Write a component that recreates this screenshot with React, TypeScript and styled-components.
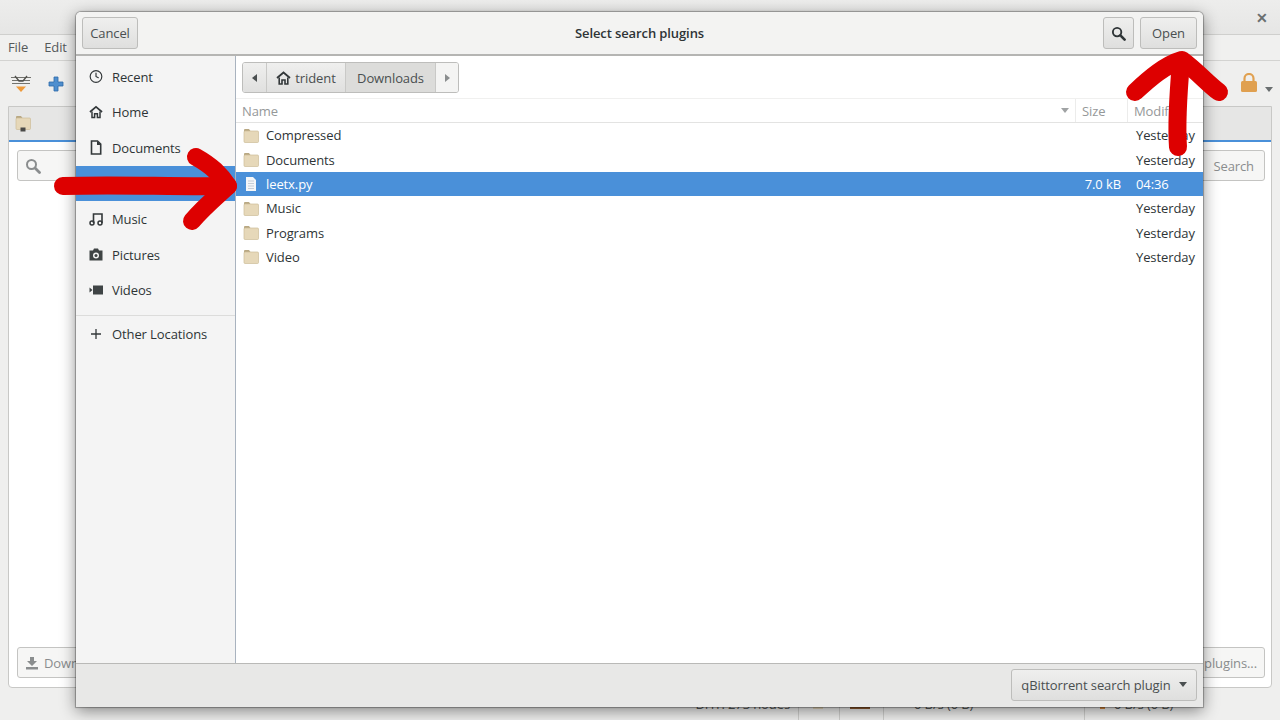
import React from "react";
import styled, { createGlobalStyle } from "styled-components";
import { Clock } from "lucide-react";

const GlobalStyle = createGlobalStyle`
  html, body {
    margin: 0;
    padding: 0;
    width: 1280px;
    height: 720px;
    overflow: hidden;
    background: #1c1c1c;
    font-family: "Open Sans", "Noto Sans", sans-serif;
    font-size: 13px;
    letter-spacing: -0.1px;
    color: #2e3436;
  }
`;

const Screen = styled.div`
  position: relative;
  width: 1280px;
  height: 720px;
  overflow: hidden;
`;

/* the qBittorrent window behind the dialog */
const AppWindow = styled.div`
  width: 1280px;
  height: 720px;
  display: flex;
  flex-direction: column;
  background: #efefee;
  border-radius: 6px 6px 0 0;
`;

const TitleBar = styled.div`
  height: 35px;
  flex-shrink: 0;
  box-sizing: border-box;
  display: flex;
  justify-content: flex-end;
  align-items: center;
  padding-right: 12px;
  border-bottom: 1px solid #cfcfcd;
  background: linear-gradient(#ededec, #e6e6e5);
  color: #6a6f70;
  font-size: 14px;
  font-weight: 700;
`;

const MenuBar = styled.div`
  height: 26px;
  flex-shrink: 0;
  box-sizing: border-box;
  display: flex;
  align-items: center;
  gap: 16px;
  padding: 0 0 2px 8px;
  border-bottom: 1px solid #d3d3d1;
  background: #f0f0ef;
  color: #55595a;
`;

const Toolbar = styled.div`
  height: 45px;
  flex-shrink: 0;
  display: flex;
  align-items: center;
  justify-content: space-between;
  padding: 0 7px 0 10px;
`;

const ToolGroup = styled.div`
  display: flex;
  align-items: center;
  gap: 16px;
`;

const LockGroup = styled.div`
  display: flex;
  align-items: flex-end;
  gap: 8px;
  padding-bottom: 3px;
`;

const Panel = styled.div`
  height: 582px;
  flex-shrink: 0;
  margin: 0 8px;
  box-sizing: border-box;
  display: flex;
  flex-direction: column;
  background: #fff;
  border: 1px solid #c8c8c6;
  border-radius: 0 0 4px 4px;
`;

const PanelTabs = styled.div`
  height: 35px;
  flex-shrink: 0;
  box-sizing: border-box;
  display: flex;
  align-items: center;
  padding-left: 6px;
  background: #e6e6e5;
  border-bottom: 2px solid #4a90d9;
`;

const PanelBody = styled.div`
  flex: 1;
  display: flex;
  flex-direction: column;
  justify-content: space-between;
  padding: 8px 6px 9px 8px;
`;

const PanelRow = styled.div`
  display: flex;
  justify-content: space-between;
`;

const BackButton = styled.div<{ $end?: number }>`
  height: 31px;
  width: 150px;
  display: flex;
  align-items: center;
  gap: 5px;
  padding: 0 ${(props) => props.$end ?? 7}px 0 7px;
  box-sizing: border-box;
  border: 1px solid #c4c4c2;
  border-radius: 3px;
  background: #f6f6f5;
  color: #8a8d8e;
  justify-content: ${(props) => (props.$end ? "flex-end" : "flex-start")};
`;

const StatusBar = styled.div`
  height: 32px;
  flex-shrink: 0;
  display: flex;
  align-items: stretch;
  padding-left: 640px;
  color: #55595a;
`;

const StatusCell = styled.div<{ $width: number; $pad?: number; $end?: boolean }>`
  width: ${(props) => props.$width}px;
  display: flex;
  align-items: center;
  gap: 9px;
  justify-content: ${(props) => (props.$end ? "flex-end" : "flex-start")};
  box-sizing: border-box;
  padding: 0 ${(props) => (props.$end ? 8 : 0)}px 0 ${(props) => props.$pad ?? 0}px;
  border-right: 1px solid #cfcfcd;
  white-space: nowrap;
  &:last-child {
    border-right: none;
  }
`;

const StatusDot = styled.span<{ $color: string; $width: number }>`
  width: ${(props) => props.$width}px;
  height: 9px;
  background: ${(props) => props.$color};
`;

/* file chooser dialog */
const Dialog = styled.div`
  position: absolute;
  left: 76px;
  top: 12px;
  width: 1127px;
  height: 695px;
  display: flex;
  flex-direction: column;
  background: #fff;
  border-radius: 5px 5px 0 0;
  box-shadow: 0 0 1px 1px rgba(0, 0, 0, 0.3), 0 4px 16px rgba(0, 0, 0, 0.45);
`;

const DialogHeader = styled.div`
  height: 44px;
  flex-shrink: 0;
  box-sizing: border-box;
  display: flex;
  align-items: center;
  justify-content: space-between;
  padding: 0 6px;
  background: #f3f3f2;
  border-bottom: 2px solid #b5b5b3;
  border-radius: 5px 5px 0 0;
`;

const HeaderTitle = styled.div`
  position: absolute;
  left: 0;
  right: 0;
  top: 12px;
  text-align: center;
  font-weight: 600;
  pointer-events: none;
`;

const HeaderActions = styled.div`
  display: flex;
  gap: 6px;
`;

const Button = styled.div<{ $width: number }>`
  width: ${(props) => props.$width}px;
  height: 32px;
  box-sizing: border-box;
  display: flex;
  align-items: center;
  justify-content: center;
  gap: 8px;
  border: 1px solid #bdbdbb;
  border-radius: 3px;
  background: linear-gradient(#efefee, #dfdfde);
  color: #4a4f50;
`;

const DialogMain = styled.div`
  flex: 1;
  min-height: 0;
  display: flex;
`;

const Sidebar = styled.div`
  width: 160px;
  flex-shrink: 0;
  box-sizing: border-box;
  padding-top: 3px;
  display: flex;
  flex-direction: column;
  background: #f4f4f4;
  border-right: 1px solid #a9b3bf;
`;

const Place = styled.div<{ $active?: boolean }>`
  height: 35.6px;
  flex-shrink: 0;
  display: flex;
  align-items: center;
  gap: 9px;
  padding-left: 13px;
  color: #2e3436;
  background: ${(props) => (props.$active ? "#4a90d9" : "transparent")};
`;

const PlaceIcon = styled.span`
  width: 14px;
  display: flex;
  justify-content: center;
  color: #3c4041;
`;

const SidebarRule = styled.div`
  height: 1px;
  margin-top: 7px;
  background: #dcdcdb;
`;

const Browser = styled.div`
  flex: 1;
  min-width: 0;
  display: flex;
  flex-direction: column;
`;

const PathRow = styled.div`
  height: 43px;
  flex-shrink: 0;
  display: flex;
  align-items: flex-start;
  padding: 6px 0 0 6px;
  box-sizing: border-box;
  border-bottom: 1px solid #f0f0ef;
`;

const PathBar = styled.div`
  height: 31px;
  display: flex;
  border: 1px solid #bdbdbb;
  border-radius: 3px;
  overflow: hidden;
  box-sizing: border-box;
`;

const PathItem = styled.div<{ $width: number; $current?: boolean; $faint?: boolean }>`
  width: ${(props) => props.$width}px;
  box-sizing: border-box;
  display: flex;
  align-items: center;
  justify-content: center;
  gap: 4px;
  color: ${(props) => (props.$faint ? "#8a8d8e" : "#4a4f50")};
  border-right: 1px solid #c9c9c7;
  background: ${(props) =>
    props.$current ? "#dcdcda" : props.$faint ? "#f4f4f3" : "linear-gradient(#efefee, #e0e0df)"};
  &:last-child {
    border-right: none;
  }
`;

const Triangle = styled.span<{ $dir: "left" | "right" | "down"; $color?: string }>`
  width: 0;
  height: 0;
  ${(props) => {
    const color = props.$color || "#4a4f50";
    if (props.$dir === "left")
      return `border-top: 4px solid transparent; border-bottom: 4px solid transparent; border-right: 5px solid ${color};`;
    if (props.$dir === "right")
      return `border-top: 4px solid transparent; border-bottom: 4px solid transparent; border-left: 5px solid ${color};`;
    return `border-left: 4.5px solid transparent; border-right: 4.5px solid transparent; border-top: 5px solid ${color};`;
  }}
`;

const ListHeader = styled.div`
  height: 24px;
  flex-shrink: 0;
  box-sizing: border-box;
  display: grid;
  grid-template-columns: 1fr 52px 75px;
  border-bottom: 1px solid #e3e3e2;
  color: #959899;
`;

const HeaderCell = styled.div`
  display: flex;
  align-items: center;
  justify-content: space-between;
  padding: 0 6px;
  border-right: 1px solid #ececeb;
  overflow: hidden;
  white-space: nowrap;
  &:last-child {
    border-right: none;
  }
`;

const FileRow = styled.div<{ $selected?: boolean }>`
  height: 24.35px;
  display: grid;
  grid-template-columns: 1fr 52px 75px;
  align-items: center;
  color: ${(props) => (props.$selected ? "#fff" : "#2e3436")};
  background: ${(props) => (props.$selected ? "#4a90d9" : "transparent")};
`;

const NameCell = styled.div`
  display: flex;
  align-items: center;
  gap: 7px;
  padding-left: 7px;
`;

const SizeCell = styled.div`
  text-align: right;
  padding-right: 7px;
`;

const DateCell = styled.div`
  padding-left: 8px;
  white-space: nowrap;
`;

const DialogFooter = styled.div`
  height: 44px;
  flex-shrink: 0;
  box-sizing: border-box;
  display: flex;
  align-items: center;
  justify-content: flex-end;
  padding: 0 6px 2px 0;
  background: #e8e8e7;
  border-top: 1px solid #b9b9b7;
`;

const Arrows = styled.svg`
  position: absolute;
  left: 0;
  top: 0;
  pointer-events: none;
`;

const FolderIcon = () => (
  <svg width="16" height="15" viewBox="0 0 16 15">
    <path d="M1 2Q1 1 2 1H6L7.500 3V6H1Z" fill="#b9a883" />
    <path d="M1 4Q1 3 2 3H14.500Q15.500 3 15.500 4V13.500Q15.500 14.500 14.500 14.500H2Q1 14.500 1 13.500Z" fill="#e6d8b9" stroke="#cdbd98" strokeWidth="0.7" />
  </svg>
);

const PageIcon = () => (
  <svg width="16" height="16" viewBox="0 0 16 16">
    <path d="M3 1H10L13 4V15H3Z" fill="#f4f6f8" />
    <path d="M5 5H11M5 7.500H11M5 10H11M5 12.500H11" stroke="#b9c3ce" strokeWidth="0.8" />
  </svg>
);

const HomeGlyph = () => (
  <svg width="15" height="14" viewBox="0 0 15 14">
    <path d="M1 7L7.500 1.500L14 7" fill="none" stroke="#33383a" strokeWidth="1.800" strokeLinejoin="miter" />
    <path d="M3.200 6.500V13H6V9H9V13H11.800V6.500" fill="none" stroke="#33383a" strokeWidth="1.600" />
  </svg>
);

const DocGlyph = () => (
  <svg width="12" height="15" viewBox="0 0 12 15">
    <path d="M1.500 1H7.500L10.700 4.200V14H1.500Z" fill="none" stroke="#33383a" strokeWidth="1.600" />
    <path d="M7 1V5H10.700" fill="#33383a" />
  </svg>
);

const MusicGlyph = () => (
  <svg width="14" height="14" viewBox="0 0 14 14">
    <circle cx="3" cy="11" r="2" fill="none" stroke="#33383a" strokeWidth="1.500" />
    <circle cx="11" cy="11" r="2" fill="none" stroke="#33383a" strokeWidth="1.500" />
    <path d="M4.500 11V2H13V11" fill="none" stroke="#33383a" strokeWidth="1.600" />
  </svg>
);

const CameraGlyph = () => (
  <svg width="14" height="13" viewBox="0 0 14 13">
    <path d="M0.500 2.500H4L5 0.500H9L10 2.500H13.500V12.500H0.500Z" fill="#3f4445" />
    <circle cx="7" cy="7.500" r="3" fill="#f4f4f4" />
    <circle cx="7" cy="7.500" r="1.500" fill="#3f4445" />
  </svg>
);

const VideoGlyph = () => (
  <svg width="14" height="10" viewBox="0 0 14 10">
    <rect x="4" y="0.500" width="10" height="9" fill="#3f4445" />
    <path d="M3.500 5L0.500 2.500V7.500Z" fill="#3f4445" />
  </svg>
);

const PlusGlyph = () => (
  <svg width="12" height="12" viewBox="0 0 12 12">
    <path d="M6 1V11M1 6H11" stroke="#33383a" strokeWidth="1.300" />
  </svg>
);

const SearchGlyph = ({ color, size }: { color: string; size: number }) => (
  <svg width={size} height={size} viewBox="0 0 16 16">
    <circle cx="6.500" cy="6.500" r="4.500" fill="none" stroke={color} strokeWidth="2" />
    <path d="M10 10L14.500 14.500" stroke={color} strokeWidth="2.800" strokeLinecap="round" />
  </svg>
);

const DownloadGlyph = () => (
  <svg width="14" height="14" viewBox="0 0 14 14">
    <path d="M5 1H9V5H12L7 10L2 5H5Z" fill="#8a8d8e" />
    <path d="M1 11H13V13.500H1Z" fill="#8a8d8e" />
  </svg>
);

const AppLogo = () => (
  <svg width="22" height="20" viewBox="0 0 22 20">
    <path d="M1 3.500H21M2 6.500H20M2 9.500H20" stroke="#73736e" strokeWidth="1.100" />
    <path d="M5 2L9 7H13L17 2" stroke="#50504c" strokeWidth="1.300" fill="none" />
    <path d="M6 12.500H16L11 18Z" fill="#ee9a3a" />
  </svg>
);

const AddIcon = () => (
  <svg width="16" height="16" viewBox="0 0 16 16">
    <path d="M6 1H10V6H15V10H10V15H6V10H1V6H6Z" fill="#4f8fcf" stroke="#2f6ba8" strokeWidth="0.800" />
  </svg>
);

const TabFolderIcon = () => (
  <svg width="16" height="17" viewBox="0 0 16 17">
    <path d="M1 2Q1 1 2 1H6L7.500 3V6H1Z" fill="#b9a883" />
    <path d="M1 4Q1 3 2 3H14.500Q15.500 3 15.500 4V13.500Q15.500 14.500 14.500 14.500H2Q1 14.500 1 13.500Z" fill="#e6d8b9" stroke="#cdbd98" strokeWidth="0.700" />
    <rect x="5.500" y="12.500" width="5" height="4" fill="#4a4a48" />
  </svg>
);

const LockIcon = () => (
  <svg width="16" height="19" viewBox="0 0 16 19">
    <path d="M3.500 8V5.500a4.500 4.500 0 0 1 9 0V8" fill="none" stroke="#e0a050" strokeWidth="2.200" />
    <rect x="0" y="8" width="16" height="11" rx="1.500" fill="#e0a050" />
  </svg>
);

const places = [
  { label: "Recent", icon: <Clock size={15} strokeWidth={2} color="#33383a" /> },
  { label: "Home", icon: <HomeGlyph /> },
  { label: "Documents", icon: <DocGlyph /> },
  { label: "", icon: null, active: true },
  { label: "Music", icon: <MusicGlyph /> },
  { label: "Pictures", icon: <CameraGlyph /> },
  { label: "Videos", icon: <VideoGlyph /> },
];

const files = [
  { name: "Compressed", size: "", date: "Yesterday" },
  { name: "Documents", size: "", date: "Yesterday" },
  { name: "leetx.py", size: "7.0 kB", date: "04:36", selected: true },
  { name: "Music", size: "", date: "Yesterday" },
  { name: "Programs", size: "", date: "Yesterday" },
  { name: "Video", size: "", date: "Yesterday" },
];

const App = () => {
  return (
    <Screen>
      <GlobalStyle />
      <AppWindow>
        <TitleBar>✕</TitleBar>
        <MenuBar>
          <span>File</span>
          <span>Edit</span>
        </MenuBar>
        <Toolbar>
          <ToolGroup>
            <AppLogo />
            <AddIcon />
          </ToolGroup>
          <LockGroup>
            <LockIcon />
            <Triangle $dir="down" $color="#6a6f70" />
          </LockGroup>
        </Toolbar>
        <Panel>
          <PanelTabs>
            <TabFolderIcon />
          </PanelTabs>
          <PanelBody>
            <PanelRow>
              <BackButton>
                <SearchGlyph color="#8a8d8e" size={16} />
              </BackButton>
              <BackButton $end={10}>Search</BackButton>
            </PanelRow>
            <PanelRow>
              <BackButton>
                <DownloadGlyph />
                Download
              </BackButton>
              <BackButton $end={7}>plugins...</BackButton>
            </PanelRow>
          </PanelBody>
        </Panel>
        <StatusBar>
          <StatusCell $width={159} $end>
            DHT: 273 nodes
          </StatusCell>
          <StatusCell $width={41} $pad={14}>
            <StatusDot $color="#e6d9bd" $width={10} />
          </StatusCell>
          <StatusCell $width={44} $pad={10}>
            <StatusDot $color="#8f5a2e" $width={20} />
          </StatusCell>
          <StatusCell $width={201} $pad={13}>
            <Triangle $dir="down" $color="#3f8a2f" />
            0 B/s (0 B)
          </StatusCell>
          <StatusCell $width={195} $pad={15}>
            <StatusDot $color="#d98a3f" $width={5} />
            0 B/s (0 B)
          </StatusCell>
        </StatusBar>
      </AppWindow>

      <Dialog>
        <DialogHeader>
          <Button $width={56}>Cancel</Button>
          <HeaderTitle>Select search plugins</HeaderTitle>
          <HeaderActions>
            <Button $width={31}>
              <SearchGlyph color="#2e3436" size={15} />
            </Button>
            <Button $width={57}>Open</Button>
          </HeaderActions>
        </DialogHeader>
        <DialogMain>
          <Sidebar>
            {places.map((place, index) => (
              <Place key={index} $active={place.active}>
                <PlaceIcon>{place.icon}</PlaceIcon>
                {place.label}
              </Place>
            ))}
            <SidebarRule />
            <Place>
              <PlaceIcon>
                <PlusGlyph />
              </PlaceIcon>
              Other Locations
            </Place>
          </Sidebar>
          <Browser>
            <PathRow>
              <PathBar>
                <PathItem $width={24}>
                  <Triangle $dir="left" />
                </PathItem>
                <PathItem $width={79}>
                  <HomeGlyph />
                  trident
                </PathItem>
                <PathItem $width={90} $current>
                  Downloads
                </PathItem>
                <PathItem $width={22} $faint>
                  <Triangle $dir="right" $color="#8a8d8e" />
                </PathItem>
              </PathBar>
            </PathRow>
            <ListHeader>
              <HeaderCell>
                Name
                <Triangle $dir="down" $color="#a0a3a4" />
              </HeaderCell>
              <HeaderCell>Size</HeaderCell>
              <HeaderCell>Modified</HeaderCell>
            </ListHeader>
            {files.map((file) => (
              <FileRow key={file.name} $selected={file.selected}>
                <NameCell>
                  {file.selected ? <PageIcon /> : <FolderIcon />}
                  {file.name}
                </NameCell>
                <SizeCell>{file.size}</SizeCell>
                <DateCell>{file.date}</DateCell>
              </FileRow>
            ))}
          </Browser>
        </DialogMain>
        <DialogFooter>
          <Button $width={186}>
            qBittorrent search plugin
            <Triangle $dir="down" />
          </Button>
        </DialogFooter>
      </Dialog>

      <Arrows width="1280" height="720" viewBox="0 0 1280 720">
        <g fill="none" stroke="#dd0000" strokeLinecap="round" strokeLinejoin="round">
          <path d="M63 186C120 184 170 187 228 186" strokeWidth="18" />
          <path d="M196 157C212 166 220 174 228 186C215 198 203 208 192 221" strokeWidth="18" />
          <path d="M1178 147C1176 120 1179 85 1181 62" strokeWidth="18" />
          <path d="M1135 92C1150 78 1165 65 1182 60C1198 72 1208 84 1219 92" strokeWidth="18" />
        </g>
      </Arrows>
    </Screen>
  );
};

export default App;
